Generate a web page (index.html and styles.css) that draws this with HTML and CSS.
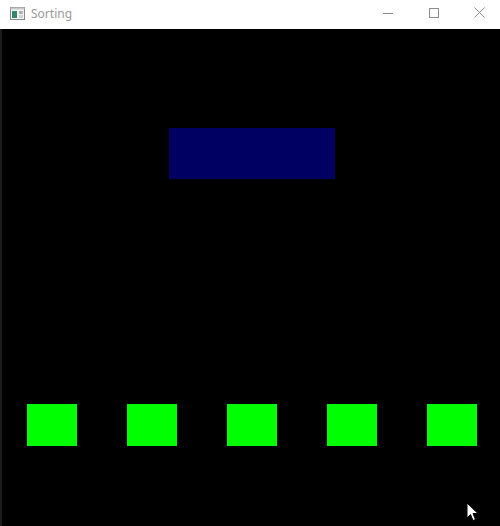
FILE: index.html
```html
<!DOCTYPE html>
<html>
<head>
<meta charset="utf-8">
<link rel="stylesheet" href="styles.css">
</head>
<body>
<div class="window">
  <div class="titlebar">
    <div class="app-icon">
      <svg width="15" height="13" viewBox="0 0 15 13">
        <rect x="0.5" y="0.5" width="14" height="12" fill="#f4f4f4" stroke="#8a8a8a"/>
        <rect x="0.5" y="0.5" width="14" height="2" fill="#c8c8c8"/>
        <rect x="2" y="4" width="5" height="7" fill="#2e8a6a"/>
        <rect x="9" y="4" width="4" height="3" fill="#b0b0b0"/>
        <rect x="9" y="8" width="4" height="3" fill="#d0d0d0"/>
      </svg>
    </div>
    <div class="title">Sorting</div>
    <div class="controls">
      <div class="ctl">
        <svg width="10" height="10" viewBox="0 0 10 10"><path d="M0 5.5 H10" stroke="#8c8c8c" stroke-width="1"/></svg>
      </div>
      <div class="ctl">
        <svg width="10" height="10" viewBox="0 0 10 10"><rect x="0.5" y="0.5" width="9" height="9" fill="none" stroke="#8c8c8c"/></svg>
      </div>
      <div class="ctl">
        <svg width="11" height="11" viewBox="0 0 11 11"><path d="M0.5 0.5 L10.5 10.5 M10.5 0.5 L0.5 10.5" stroke="#8c8c8c" stroke-width="1"/></svg>
      </div>
    </div>
  </div>
  <div class="canvas">
    <div class="pivot"></div>
    <div class="row">
      <div class="item"></div>
      <div class="item"></div>
      <div class="item"></div>
      <div class="item"></div>
      <div class="item"></div>
    </div>
    <svg class="cursor" width="14" height="20" viewBox="0 0 14 20">
      <path d="M1 1 L1 16 L4.5 12.5 L7 18.5 L9.5 17.5 L7 11.5 L12 11.5 Z" fill="#ffffff" stroke="#000" stroke-width="1"/>
    </svg>
  </div>
</div>
</body>
</html>
```

FILE: styles.css
```css
html, body {
  margin: 0;
  padding: 0;
  background: #000;
}
.window {
  width: 500px;
  height: 526px;
  display: flex;
  flex-direction: column;
  overflow: hidden;
}
.titlebar {
  height: 29px;
  background: #fff;
  display: flex;
  align-items: center;
  font-family: "Noto Sans", "Open Sans", sans-serif;
  flex-shrink: 0;
}
.app-icon {
  margin-left: 10px;
  width: 15px;
  height: 13px;
  display: flex;
  margin-top: -2px;
}
.title {
  margin-left: 6px;
  font-size: 12px;
  color: #9a9a9a;
  margin-top: -2px;
}
.controls {
  margin-left: auto;
  display: flex;
  height: 29px;
}
.ctl {
  width: 46px;
  display: flex;
  align-items: center;
  justify-content: center;
  padding-bottom: 4px;
  padding-left: 5px;
  box-sizing: border-box;
}
.canvas {
  position: relative;
  flex: 1;
  background: #000;
  border-left: 2px solid #1c1c1c;
  display: flex;
  flex-direction: column;
}
.pivot {
  margin-left: 167px;
  margin-top: 99px;
  width: 166px;
  height: 51px;
  background: #000063;
}
.row {
  display: flex;
  gap: 50px;
  margin-left: 25px;
  margin-top: 225px;
}
.item {
  width: 50px;
  height: 42px;
  background: #00ff00;
}
.cursor {
  position: absolute;
  left: 464px;
  top: 473px;
}
```
